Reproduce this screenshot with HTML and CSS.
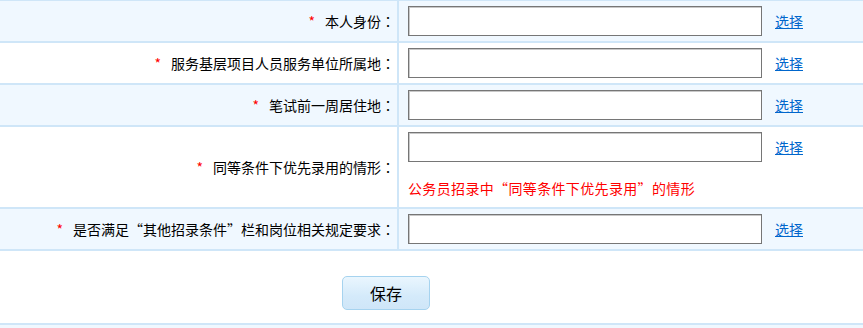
FILE: index.html
```html
<!DOCTYPE html>
<html lang="zh-CN">
<head>
<meta charset="utf-8">
<title>表单</title>
<link rel="stylesheet" href="styles.css">
</head>
<body>
<div class="page">
  <div class="form">
    <div class="row alt">
      <div class="label"><span class="req">*</span>本人身份<span class="colon">：</span></div>
      <div class="field"><div class="line"><input class="text" type="text"><a class="pick" href="#">选择</a></div></div>
    </div>
    <div class="row">
      <div class="label"><span class="req">*</span>服务基层项目人员服务单位所属地<span class="colon">：</span></div>
      <div class="field"><div class="line"><input class="text" type="text"><a class="pick" href="#">选择</a></div></div>
    </div>
    <div class="row alt">
      <div class="label"><span class="req">*</span>笔试前一周居住地<span class="colon">：</span></div>
      <div class="field"><div class="line"><input class="text" type="text"><a class="pick" href="#">选择</a></div></div>
    </div>
    <div class="row tall">
      <div class="label"><span class="req">*</span>同等条件下优先录用的情形<span class="colon">：</span></div>
      <div class="field top"><div class="line"><input class="text" type="text"><a class="pick" href="#">选择</a></div>
        <div class="hint">公务员招录中“同等条件下优先录用”的情形</div></div>
    </div>
    <div class="row alt">
      <div class="label"><span class="req">*</span>是否满足“其他招录条件”栏和岗位相关规定要求<span class="colon">：</span></div>
      <div class="field"><div class="line"><input class="text" type="text"><a class="pick" href="#">选择</a></div></div>
    </div>
  </div>
  <div class="actions">
    <button class="save" type="button">保存</button>
  </div>
</div>
</body>
</html>
```
FILE: styles.css
```css
html, body {
  margin: 0;
  padding: 0;
  background: #f0f8ff;
}
body {
  font-family: "Noto Sans CJK SC", "Microsoft YaHei", sans-serif;
  font-size: 14px;
  color: #000;
}
.page {
  width: 863px;
  background: #fff;
  border-bottom: 2px solid #cfe6f8;
}
.form {
  border-top: 1px solid #cfe6f8;
}
.row {
  display: grid;
  grid-template-columns: 399px 1fr;
  height: 40px;
  border-bottom: 2px solid #cfe6f8;
  background: #fff;
}
.row.alt {
  background: #f0f8ff;
}
.row.tall {
  height: 80px;
}
.label {
  display: flex;
  align-items: center;
  justify-content: flex-end;
  padding-right: 2px;
  border-right: 2px solid #cfe6f8;
  white-space: nowrap;
}
.colon {
  font-family: "Noto Sans CJK TC", "Noto Sans CJK SC", sans-serif;
}
.req {
  color: #ff0000;
  margin-right: 10px;
  font-size: 14px;
}
.field {
  display: flex;
  flex-direction: column;
  justify-content: center;
  padding-left: 9px;
}
.field.top {
  justify-content: flex-start;
  padding-top: 5px;
}
.line {
  display: flex;
  align-items: center;
}
.text {
  box-sizing: border-box;
  width: 354px;
  height: 30px;
  margin: 0;
  padding: 0 4px;
  border: 1px solid #767676;
  box-shadow: inset 1px 1px 0 #c8c8c8;
  background: #fff;
  font: inherit;
}
.pick {
  margin-left: 13px;
  color: #0066cc;
  text-decoration: underline;
}
.hint {
  color: #ff0000;
  margin-top: 16px;
  line-height: 20px;
  letter-spacing: 0.35px;
}
.actions {
  height: 72px;
  padding-left: 342px;
  box-sizing: border-box;
  padding-top: 25px;
}
.save {
  width: 88px;
  height: 34px;
  border: 1px solid #a6d3ef;
  border-radius: 5px;
  background: linear-gradient(#eaf6fe, #d4eafa 60%, #cfe6f8);
  font-family: "Noto Sans CJK SC", sans-serif;
  font-size: 16px;
  color: #000;
  padding: 0;
}
```
